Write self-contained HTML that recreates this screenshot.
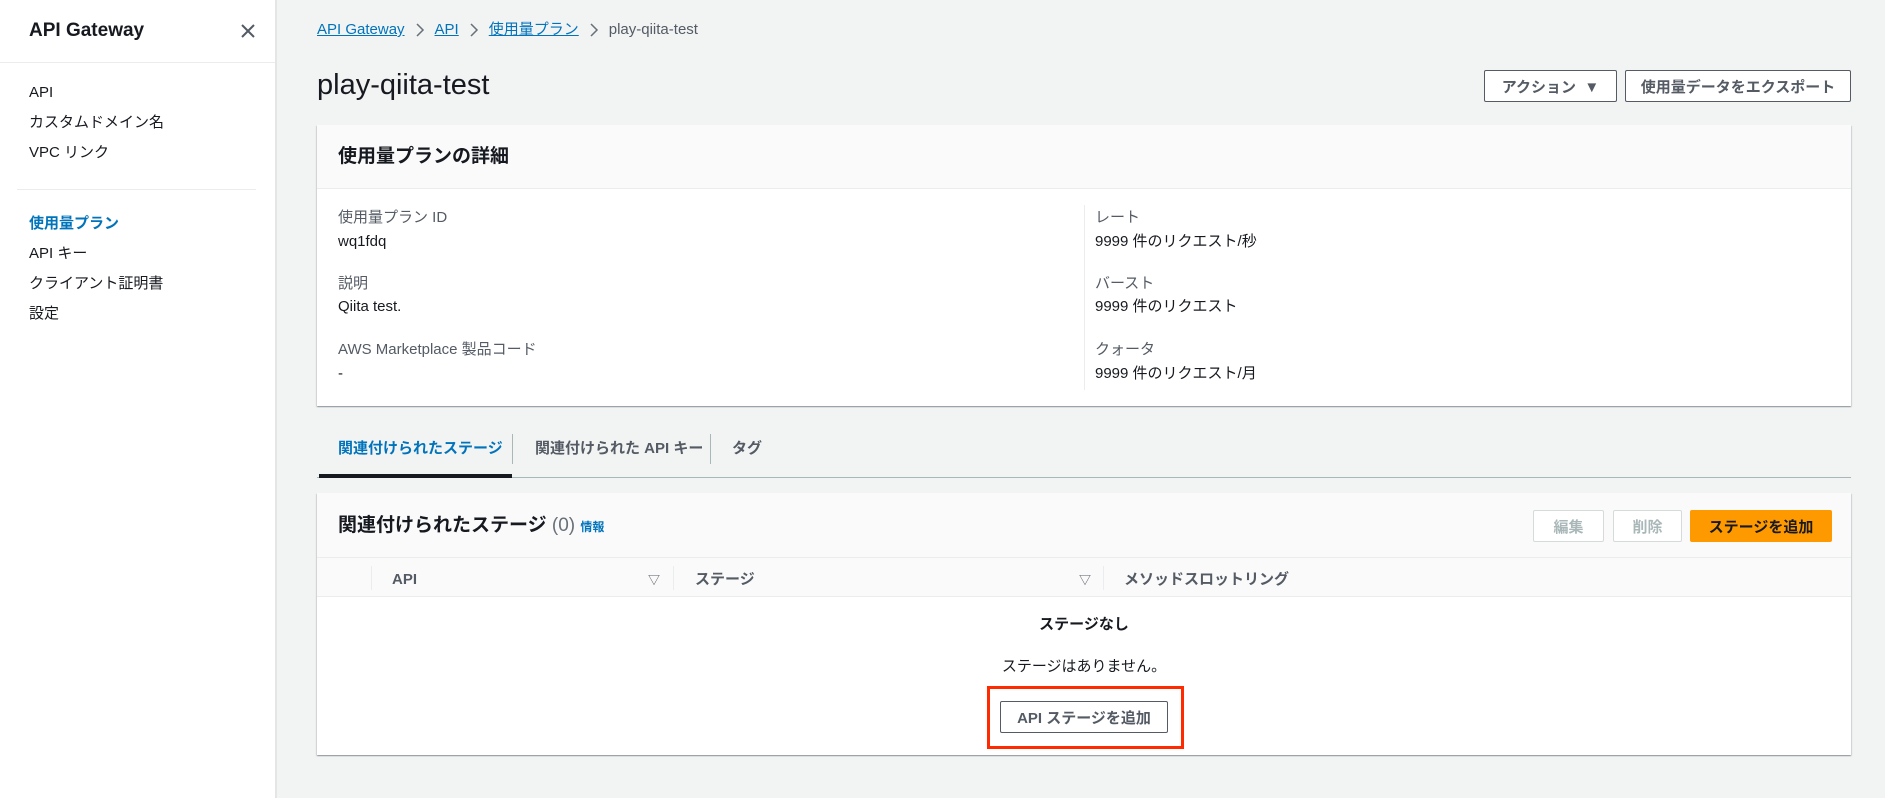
<!DOCTYPE html>
<html><head><meta charset="utf-8"><style>
*{box-sizing:border-box;margin:0;padding:0}
body{width:1885px;height:798px;background:#f2f3f3;font-family:"Liberation Sans","Noto Sans CJK JP",sans-serif;color:#16191f;position:relative;overflow:hidden;font-size:15px}
.a{position:absolute;white-space:nowrap}
#side{position:absolute;left:0;top:0;width:277px;height:798px;background:#fff;border-right:2px solid #e4e6e6}
.nav{position:absolute;left:29px;font-size:15px;color:#16191f;line-height:18px}
.bc{color:#0073bb;text-decoration:underline}
.btn{position:absolute;border:1px solid #545b64;border-radius:2px;background:#fff;font-weight:bold;color:#545b64;font-size:15px;display:flex;align-items:center;justify-content:center}
.card{position:absolute;left:317px;width:1534px;background:#fff;box-shadow:0 1px 1px rgba(0,28,36,.3),1px 1px 1px rgba(0,28,36,.1),-1px 1px 1px rgba(0,28,36,.1)}
.lbl{position:absolute;font-size:15px;color:#545b64;line-height:18px}
.val{position:absolute;font-size:15px;color:#16191f;line-height:18px}
.th{position:absolute;top:77px;line-height:20px;font-weight:bold;color:#545b64}
.chev{display:inline-block;vertical-align:middle;margin:0 10px}
</style></head><body>
<div id="side">
<div class="a" style="left:29px;top:20px;font-size:19px;font-weight:bold">API Gateway</div>
<svg class="a" style="left:240px;top:23px" width="16" height="16" viewBox="0 0 16 16"><path d="M2 2L14 14M14 2L2 14" stroke="#545b64" stroke-width="2"/></svg>
<div class="a" style="left:0;top:62px;width:275px;border-top:1px solid #eaeded"></div>
<div class="nav" style="top:84px">API</div>
<div class="nav" style="top:114px">カスタムドメイン名</div>
<div class="nav" style="top:144px">VPC リンク</div>
<div class="a" style="left:17px;top:189px;width:239px;border-top:1px solid #eaeded"></div>
<div class="nav" style="top:215px;color:#0073bb;font-weight:bold">使用量プラン</div>
<div class="nav" style="top:245px">API キー</div>
<div class="nav" style="top:275px">クライアント証明書</div>
<div class="nav" style="top:305px">設定</div>
</div>
<div class="a" style="left:317px;top:21px;font-size:15px;line-height:18px"><span class="bc">API Gateway</span><svg class="chev" width="10" height="14" viewBox="0 0 10 14"><path d="M2 1l6 6-6 6" fill="none" stroke="#687078" stroke-width="1.5"/></svg><span class="bc">API</span><svg class="chev" width="10" height="14" viewBox="0 0 10 14"><path d="M2 1l6 6-6 6" fill="none" stroke="#687078" stroke-width="1.5"/></svg><span class="bc">使用量プラン</span><svg class="chev" width="10" height="14" viewBox="0 0 10 14"><path d="M2 1l6 6-6 6" fill="none" stroke="#687078" stroke-width="1.5"/></svg><span style="color:#545b64">play-qiita-test</span></div>
<div class="a" style="left:317px;top:68px;font-size:29px;line-height:34px">play-qiita-test</div>
<div class="btn" style="left:1484px;top:70px;width:133px;height:32px">アクション&nbsp;&nbsp;▼</div>
<div class="btn" style="left:1625px;top:70px;width:226px;height:32px">使用量データをエクスポート</div>

<div class="card" style="top:125px;height:281px">
<div class="a" style="left:0;top:0;width:1534px;height:64px;background:#fafafa;border-bottom:1px solid #eaeded"></div>
<div class="a" style="left:21px;top:20px;font-size:19px;font-weight:bold;line-height:24px">使用量プランの詳細</div>
<div class="a" style="left:767px;top:80px;height:185px;border-left:1px solid #eaeded"></div>
<div class="lbl" style="left:21px;top:84px">使用量プラン ID</div>
<div class="val" style="left:21px;top:108px">wq1fdq</div>
<div class="lbl" style="left:21px;top:150px">説明</div>
<div class="val" style="left:21px;top:173px">Qiita test.</div>
<div class="lbl" style="left:21px;top:216px">AWS Marketplace 製品コード</div>
<div class="val" style="left:21px;top:240px">-</div>
<div class="lbl" style="left:778px;top:84px">レート</div>
<div class="val" style="left:778px;top:108px">9999 件のリクエスト/秒</div>
<div class="lbl" style="left:778px;top:150px">バースト</div>
<div class="val" style="left:778px;top:173px">9999 件のリクエスト</div>
<div class="lbl" style="left:778px;top:216px">クォータ</div>
<div class="val" style="left:778px;top:240px">9999 件のリクエスト/月</div>
</div>

<div class="a" style="left:317px;top:477px;width:1534px;border-top:1px solid #aab7b8"></div>
<div class="a" style="left:319px;top:474px;width:193px;height:4px;background:#16191f"></div>
<div class="a" style="left:338px;top:440px;font-weight:bold;color:#0073bb;line-height:18px">関連付けられたステージ</div>
<div class="a" style="left:512px;top:434px;height:30px;border-left:1px solid #aab7b8"></div>
<div class="a" style="left:535px;top:440px;font-weight:bold;color:#545b64;line-height:18px">関連付けられた API キー</div>
<div class="a" style="left:710px;top:434px;height:30px;border-left:1px solid #aab7b8"></div>
<div class="a" style="left:732px;top:440px;font-weight:bold;color:#545b64;line-height:18px">タグ</div>

<div class="card" style="top:493px;height:262px">
<div class="a" style="left:0;top:0;width:1534px;height:65px;background:#fafafa;border-bottom:1px solid #eaeded"></div>
<div class="a" style="left:21px;top:21px;font-size:19px;font-weight:bold;line-height:24px">関連付けられたステージ <span style="font-weight:normal;color:#687078">(0)</span> <span style="font-size:12px;color:#0073bb">情報</span></div>
<div class="btn" style="left:1216px;top:17px;width:71px;height:32px;border-color:#d5dbdb;color:#aab7b8">編集</div>
<div class="btn" style="left:1296px;top:17px;width:69px;height:32px;border-color:#d5dbdb;color:#aab7b8">削除</div>
<div class="btn" style="left:1373px;top:17px;width:142px;height:32px;border-color:#ff9900;background:#ff9900;color:#16191f">ステージを追加</div>
<div class="a" style="left:0;top:65px;width:1534px;height:39px;background:#fafafa;border-bottom:1px solid #eaeded"></div>
<div class="a" style="left:54px;top:73px;height:24px;border-left:1px solid #eaeded"></div>
<div class="th" style="left:75px">API</div>
<div class="th" style="left:331px;font-size:12px;font-weight:normal">▽</div>
<div class="a" style="left:356px;top:73px;height:24px;border-left:1px solid #eaeded"></div>
<div class="th" style="left:378px">ステージ</div>
<div class="th" style="left:762px;font-size:12px;font-weight:normal">▽</div>
<div class="a" style="left:786px;top:73px;height:24px;border-left:1px solid #eaeded"></div>
<div class="th" style="left:807px">メソッドスロットリング</div>
<div class="a" style="left:0;top:123px;width:1534px;text-align:center;font-weight:bold;line-height:18px">ステージなし</div>
<div class="a" style="left:0;top:165px;width:1534px;text-align:center;line-height:18px">ステージはありません。</div>
<div class="btn" style="left:683px;top:208px;width:168px;height:32px">API ステージを追加</div>
<div class="a" style="left:670px;top:193px;width:197px;height:63px;border:3px solid #ff2a00"></div>
</div>
</body></html>
